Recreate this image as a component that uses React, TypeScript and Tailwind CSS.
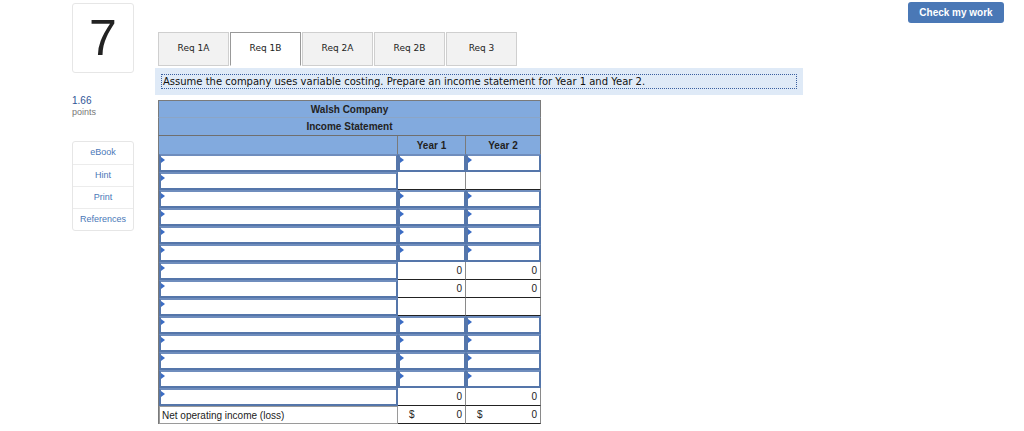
import React from 'react'

type Cell = 'input' | 'blank' | string

const rows: { label: Cell; y1: Cell; y2: Cell; dollar?: boolean }[] = [
  { label: 'input', y1: 'input', y2: 'input' },
  { label: 'input', y1: 'blank', y2: 'blank' },
  { label: 'input', y1: 'input', y2: 'input' },
  { label: 'input', y1: 'input', y2: 'input' },
  { label: 'input', y1: 'input', y2: 'input' },
  { label: 'input', y1: 'input', y2: 'input' },
  { label: 'input', y1: '0', y2: '0' },
  { label: 'input', y1: '0', y2: '0' },
  { label: 'input', y1: 'blank', y2: 'blank' },
  { label: 'input', y1: 'input', y2: 'input' },
  { label: 'input', y1: 'input', y2: 'input' },
  { label: 'input', y1: 'input', y2: 'input' },
  { label: 'input', y1: 'input', y2: 'input' },
  { label: 'input', y1: '0', y2: '0' },
  { label: 'Net operating income (loss)', y1: '0', y2: '0', dollar: true },
]

const tabs = ['Req 1A', 'Req 1B', 'Req 2A', 'Req 2B', 'Req 3']

function Marker() {
  return (
    <span className="absolute left-0 top-[1px] w-0 h-0 border-y-[3px] border-y-transparent border-l-[4px] border-l-[#3b6cc4]" />
  )
}

function TableCell({ value, width, dollar, isLabel }: { value: Cell; width: string; dollar?: boolean; isLabel?: boolean }) {
  if (value === 'input') {
    return (
      <div className={`${width} h-full relative bg-white border-2 border-[#5576aa] border-t-[#6f8dbd]`}>
        <Marker />
      </div>
    )
  }
  if (isLabel) {
    return (
      <div className={`${width} h-full flex items-center bg-white border border-[#9a9a9a] px-[2px] text-[10px] text-[#222]`}>
        {value}
      </div>
    )
  }
  return (
    <div className={`${width} h-full flex items-center justify-between bg-white border-r border-r-[#8a8a8a] border-b border-b-[#222] px-[3px] text-[10px] text-[#222]`}>
      <span className="pl-[8px]">{dollar ? '$' : ''}</span>
      <span>{value === 'blank' ? '' : value}</span>
    </div>
  )
}

export default function App() {
  return (
    <div className="w-[1024px] h-[431px] bg-white flex overflow-hidden" style={{ fontFamily: '"Liberation Sans", Arial, sans-serif' }}>
      {/* left rail */}
      <div className="ml-[72px] w-[62px] flex flex-col pt-[3px]">
        <div className="h-[70px] border border-[#e6e6e6] rounded-[3px] flex items-center justify-center">
          <span className="text-[50px] leading-none text-[#222]" style={{ fontFamily: '"Liberation Sans", Arial, sans-serif' }}>7</span>
        </div>
        <div className="mt-[22px] text-[10px] leading-[12px] text-[#2f5597]">1.66</div>
        <div className="text-[9px] leading-[11px] text-[#777]">points</div>
        <div className="mt-[23px] border border-[#e6e6e6] rounded-[3px] flex flex-col text-[9px] text-[#4a78b8]">
          {['eBook', 'Hint', 'Print', 'References'].map((t, i) => (
            <div key={t} className={`h-[22px] flex items-center justify-center ${i > 0 ? 'border-t border-[#ececec]' : ''}`}>{t}</div>
          ))}
        </div>
      </div>

      {/* main */}
      <div className="ml-[21px] w-[648px] flex flex-col pt-[32px]">
        <div className="flex gap-[1px] ml-[3px] h-[34px]" style={{ fontFamily: '"DejaVu Sans", Verdana, sans-serif' }}>
          {tabs.map((t) => (
            <div
              key={t}
              className={`w-[71px] h-full flex items-center justify-center text-[9px] text-[#222] border ${t === 'Req 1B' ? 'bg-white border-[#999] border-b-white' : 'bg-[#f2f2f2] border-[#cfcfcf]'}`}
            >
              {t}
            </div>
          ))}
        </div>
        <div className="mt-[2px] h-[27px] bg-[#dfeaf7] flex items-center px-[6px]">
          <div
            className="w-full border border-dotted border-[#3a5fa0] px-[1px] text-[10px] leading-[13px] text-[#111]"
            style={{ fontFamily: '"DejaVu Sans", Verdana, sans-serif' }}
          >
            Assume the company uses variable costing. Prepare an income statement for Year 1 and Year 2.
          </div>
        </div>

        <div className="mt-[5px] ml-[3px] w-[383px] flex flex-col text-[#222]">
          <div className="h-[18px] bg-[#82aade] border border-[#7a7a7a] border-b-[#8ba5c6] flex items-center justify-center text-[10px] font-bold">Walsh Company</div>
          <div className="h-[18px] bg-[#82aade] border-x border-[#7a7a7a] border-b border-b-[#6f6f6f] flex items-center justify-center text-[10px] font-bold">Income Statement</div>
          <div className="h-[18px] flex bg-[#82aade] border-x border-[#7a7a7a] text-[10px] font-bold">
            <div className="w-[239px] border-r border-[#7a7a7a]" />
            <div className="w-[68px] border-r border-[#7a7a7a] flex items-center justify-center">Year 1</div>
            <div className="flex-1 flex items-center justify-center">Year 2</div>
          </div>
          {rows.map((r, i) => (
            <div key={i} className="h-[18px] flex border-l border-[#7a7a7a]">
              <TableCell value={r.label} width="w-[239px]" isLabel />
              <TableCell value={r.y1} width="w-[68px]" dollar={r.dollar} />
              <TableCell value={r.y2} width="flex-1" dollar={r.dollar} />
            </div>
          ))}
        </div>
      </div>

      {/* right */}
      <div className="flex-1 flex justify-end items-start pt-[2px] pr-[20px]">
        <button className="w-[96px] h-[21px] bg-[#4a78b6] rounded-[3px] text-white text-[10px] font-bold">Check my work</button>
      </div>
    </div>
  )
}
